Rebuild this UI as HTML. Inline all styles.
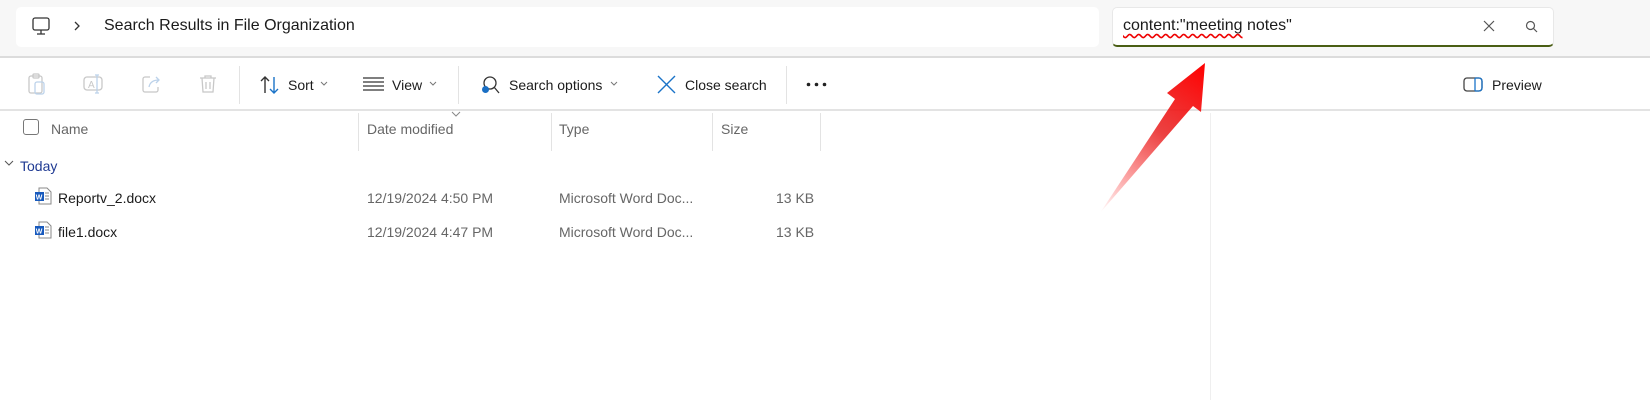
<!DOCTYPE html>
<html><head><meta charset="utf-8"><style>
*{margin:0;padding:0;box-sizing:border-box}
body{width:1650px;height:400px;background:#fff;font-family:"Liberation Sans",sans-serif;position:relative;overflow:hidden;color:#1b1b1b}
.a{position:absolute;white-space:nowrap}
.t{font-size:14px}
.g{color:#666}
.sep{position:absolute;width:1px;background:#e3e3e3}
</style></head><body>
<div class="a" style="left:0;top:0;width:1650px;height:56px;background:#f7f7f7"></div>
<div class="a" style="left:0;top:56px;width:1650px;height:2px;background:#dcdcdc"></div>
<div class="a" style="left:16px;top:7px;width:1083px;height:40px;background:#fff;border-radius:5px"></div>
<svg class="a" style="left:31px;top:16px" width="20" height="20" viewBox="0 0 20 20" fill="none" stroke="#333" stroke-width="1.3"><rect x="2" y="2" width="16" height="12" rx="2"/><path d="M6 18h8M10 14v4"/></svg>
<svg class="a" style="left:72px;top:21px" width="10" height="10" viewBox="0 0 10 10" fill="none" stroke="#333" stroke-width="1.3"><path d="M3 1l4 4-4 4"/></svg>
<div class="a" style="left:104px;top:17px;font-size:16px">Search Results in File Organization</div>
<div class="a" style="left:1112px;top:7px;width:442px;height:40px;background:#fff;border-radius:5px;border:1px solid #e8e8e8;border-bottom:2px solid #4a5e14"></div>
<div class="a" style="left:1123px;top:17px;font-size:16px"><span style="text-decoration:underline wavy #e00;text-underline-offset:3px">content:"meeting</span> notes"</div>
<svg class="a" style="left:1483px;top:20px" width="12" height="12" viewBox="0 0 12 12" stroke="#555" stroke-width="1.2"><path d="M1 1l10 10M11 1L1 11"/></svg>
<svg class="a" style="left:1525px;top:20px" width="13" height="13" viewBox="0 0 13 13" fill="none" stroke="#555" stroke-width="1.2"><circle cx="5.5" cy="5.5" r="4"/><path d="M8.5 8.5l3.5 3.5"/></svg>

<svg class="a" style="left:27px;top:73px" width="20" height="22" viewBox="0 0 20 22" fill="none" stroke="#c8c8c8" stroke-width="1.3"><rect x="2" y="3" width="13" height="17" rx="2"/><rect x="6" y="1" width="6" height="4" rx="1"/><rect x="8" y="9" width="9" height="12" rx="2" stroke="#bcd2ea"/></svg>
<svg class="a" style="left:83px;top:74px" width="22" height="20" viewBox="0 0 22 20" fill="none" stroke="#c8c8c8" stroke-width="1.3"><rect x="1" y="3" width="18" height="13" rx="3"/><text x="5" y="14" font-size="10" fill="#c8c8c8" stroke="none" font-family="Liberation Sans">A</text><path d="M14 1v18M12 1h4M12 19h4" stroke="#bcd2ea"/></svg>
<svg class="a" style="left:142px;top:75px" width="20" height="18" viewBox="0 0 20 18" fill="none" stroke="#c8c8c8" stroke-width="1.3"><path d="M8 2H3a2 2 0 00-2 2v11a2 2 0 002 2h11a2 2 0 002-2v-3"/><path d="M7 12c1-5 5-7 10-7M14 2l3 3-3 3" stroke="#bcd2ea"/></svg>
<svg class="a" style="left:199px;top:74px" width="18" height="20" viewBox="0 0 18 20" fill="none" stroke="#c8c8c8" stroke-width="1.3"><path d="M1 4h16M6 4V2h6v2M3 4l1 14h10l1-14M7 8v7M11 8v7"/></svg>
<div class="sep" style="left:239px;top:66px;height:38px"></div>
<svg class="a" style="left:259px;top:75px" width="22" height="20" viewBox="0 0 22 20" fill="none" stroke-width="1.4"><path d="M6 18V2M2 6l4-4 4 4" stroke="#333"/><path d="M15 2v16M11 14l4 4 4-4" stroke="#1a73c8"/></svg>
<div class="a t" style="left:288px;top:77px">Sort</div>
<svg class="a" style="left:320px;top:81px" width="8" height="6" viewBox="0 0 8 6" fill="none" stroke="#777"><path d="M1 1l3 3 3-3"/></svg>
<svg class="a" style="left:363px;top:77px" width="21" height="14" viewBox="0 0 21 14" stroke="#333" stroke-width="1.2"><path d="M0 1h21M0 5h21M0 9h21M0 13h21"/></svg>
<div class="a t" style="left:392px;top:77px">View</div>
<svg class="a" style="left:429px;top:81px" width="8" height="6" viewBox="0 0 8 6" fill="none" stroke="#777"><path d="M1 1l3 3 3-3"/></svg>
<div class="sep" style="left:458px;top:66px;height:38px"></div>
<svg class="a" style="left:480px;top:75px" width="20" height="20" viewBox="0 0 20 20" fill="none"><circle cx="10" cy="8" r="6" stroke="#333" stroke-width="1.3"/><path d="M14 12l5 6" stroke="#333" stroke-width="1.3"/><circle cx="5.5" cy="14.5" r="3.5" fill="#1a6fc4"/></svg>
<div class="a t" style="left:509px;top:77px">Search options</div>
<svg class="a" style="left:610px;top:81px" width="8" height="6" viewBox="0 0 8 6" fill="none" stroke="#777"><path d="M1 1l3 3 3-3"/></svg>
<svg class="a" style="left:657px;top:75px" width="19" height="19" viewBox="0 0 19 19" stroke="#1a73c8" stroke-width="1.4"><path d="M1 1l17 17M18 1L1 18"/></svg>
<div class="a t" style="left:685px;top:77px">Close search</div>
<div class="sep" style="left:786px;top:66px;height:38px"></div>
<svg class="a" style="left:806px;top:82px" width="22" height="5" viewBox="0 0 22 5" fill="#222"><circle cx="2.5" cy="2.5" r="1.8"/><circle cx="10.5" cy="2.5" r="1.8"/><circle cx="18.5" cy="2.5" r="1.8"/></svg>
<svg class="a" style="left:1463px;top:77px" width="20" height="15" viewBox="0 0 20 15" fill="none" stroke-width="1.3"><rect x="1" y="1" width="18" height="13" rx="3" stroke="#444"/><path d="M12 1v13" stroke="#1a73c8"/><path d="M12 1h4a3 3 0 013 3v7a3 3 0 01-3 3h-4" stroke="#1a73c8"/></svg>
<div class="a t" style="left:1492px;top:77px">Preview</div>
<div class="a" style="left:0;top:109px;width:1650px;height:2px;background:#e3e3e3"></div>

<div class="a" style="left:23px;top:119px;width:16px;height:16px;border:1px solid #777;border-radius:3px"></div>
<div class="a t g" style="left:51px;top:121px">Name</div>
<div class="sep" style="left:358px;top:113px;height:38px"></div>
<svg class="a" style="left:451px;top:111px" width="10" height="6" viewBox="0 0 10 6" fill="none" stroke="#888"><path d="M1 1l4 4 4-4"/></svg>
<div class="a t g" style="left:367px;top:121px">Date modified</div>
<div class="sep" style="left:551px;top:113px;height:38px"></div>
<div class="a t g" style="left:559px;top:121px">Type</div>
<div class="sep" style="left:712px;top:113px;height:38px"></div>
<div class="a t g" style="left:721px;top:121px">Size</div>
<div class="sep" style="left:820px;top:113px;height:38px"></div>
<div class="sep" style="left:1210px;top:113px;height:287px;background:#efefef"></div>

<svg class="a" style="left:4px;top:160px" width="10" height="6" viewBox="0 0 10 6" fill="none" stroke="#555"><path d="M1 1l4 4 4-4"/></svg>
<div class="a t" style="left:20px;top:158px;color:#1f3a93">Today</div>

<svg class="a" style="left:34px;top:187px" width="18" height="18" viewBox="0 0 18 18"><path d="M5 1h8l4 4v12H5z" fill="#fff" stroke="#888"/><path d="M11 6h4M11 9h4M11 12h4" stroke="#888"/><rect x="1" y="5" width="9" height="9" fill="#185abd"/><text x="1.8" y="12.5" font-size="7" fill="#fff" font-weight="bold" font-family="Liberation Sans">W</text></svg>
<div class="a t" style="left:58px;top:190px">Reportv_2.docx</div>
<div class="a t g" style="left:367px;top:190px">12/19/2024 4:50 PM</div>
<div class="a t g" style="left:559px;top:190px">Microsoft Word Doc...</div>
<div class="a t g" style="left:776px;top:190px">13 KB</div>

<svg class="a" style="left:34px;top:221px" width="18" height="18" viewBox="0 0 18 18"><path d="M5 1h8l4 4v12H5z" fill="#fff" stroke="#888"/><path d="M11 6h4M11 9h4M11 12h4" stroke="#888"/><rect x="1" y="5" width="9" height="9" fill="#185abd"/><text x="1.8" y="12.5" font-size="7" fill="#fff" font-weight="bold" font-family="Liberation Sans">W</text></svg>
<div class="a t" style="left:58px;top:224px">file1.docx</div>
<div class="a t g" style="left:367px;top:224px">12/19/2024 4:47 PM</div>
<div class="a t g" style="left:559px;top:224px">Microsoft Word Doc...</div>
<div class="a t g" style="left:776px;top:224px">13 KB</div>

<svg class="a" style="left:1090px;top:55px" width="130" height="165" viewBox="0 0 130 165">
<defs><linearGradient id="ag" x1="10" y1="158" x2="115" y2="8" gradientUnits="userSpaceOnUse"><stop offset="0" stop-color="#f00" stop-opacity="0"/><stop offset="0.55" stop-color="#e82020" stop-opacity="0.85"/><stop offset="1" stop-color="#f00"/></linearGradient></defs>
<polygon points="10,158 85,44 77,38 115,8 111,57 103,51" fill="url(#ag)"/>
</svg>
</body></html>
